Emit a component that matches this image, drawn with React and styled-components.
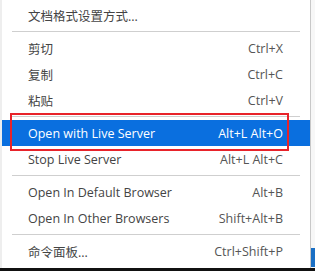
import React from 'react';
import styled, { createGlobalStyle } from 'styled-components';

const GlobalStyle = createGlobalStyle`
  html, body {
    margin: 0;
    padding: 0;
    background: #f3f3f3;
  }
  body {
    width: 315px;
    height: 271px;
    overflow: hidden;
    font-family: "Open Sans", "Noto Sans CJK SC", sans-serif;
  }
`;

const Screen = styled.div`
  width: 315px;
  height: 271px;
  display: flex;
  flex-direction: column;
`;

const Desk = styled.div`
  flex: 1;
  display: flex;
  min-height: 0;
`;

const EdgeStrip = styled.div`
  width: 2px;
  background: #eeeeee;
`;

const SideStrip = styled.div`
  flex: 1;
  display: flex;
  flex-direction: column;
  justify-content: flex-end;
  background: #f7f7f7;
  border-left: 1px solid #c8c8c8;
  padding-bottom: 1px;
`;

const SideBlock = styled.div`
  height: 19px;
  background: #1a6fc4;
`;

const Taskbar = styled.div`
  height: 3px;
  background: #111;
`;

const Menu = styled.div`
  position: relative;
  width: 308px;
  background: #fff;
  padding-top: 2px;
  display: flex;
  flex-direction: column;
`;

const Item = styled.div`
  height: 26px;
  display: flex;
  align-items: center;
  justify-content: space-between;
  padding: 0 27px 0 26px;
  font-size: 12.5px;
  color: ${({ active }) => (active ? '#fff' : '#444')};
  background: ${({ active }) => (active ? '#0a6fdf' : 'transparent')};
`;

const Label = styled.span`
  white-space: nowrap;
`;

const Keys = styled.span`
  white-space: nowrap;
  color: ${({ active }) => (active ? '#fff' : '#555')};
`;

const Separator = styled.div`
  height: 7px;
  display: flex;
  align-items: center;
  padding: 0 10px;

  &::after {
    content: '';
    flex: 1;
    height: 1px;
    background: #cfcfcf;
  }
`;

const Highlight = styled.div`
  position: absolute;
  left: 8px;
  top: 113px;
  width: 275px;
  height: 34px;
  border: 2px solid #e8232a;
  pointer-events: none;
`;

const groups = [
  [{ label: '文档格式设置方式...' }],
  [
    { label: '剪切', keys: 'Ctrl+X' },
    { label: '复制', keys: 'Ctrl+C' },
    { label: '粘贴', keys: 'Ctrl+V' },
  ],
  [
    { label: 'Open with Live Server', keys: 'Alt+L Alt+O', active: true },
    { label: 'Stop Live Server', keys: 'Alt+L Alt+C' },
  ],
  [
    { label: 'Open In Default Browser', keys: 'Alt+B' },
    { label: 'Open In Other Browsers', keys: 'Shift+Alt+B' },
  ],
  [{ label: '命令面板...', keys: 'Ctrl+Shift+P' }],
];

const App = () => (
  <Screen>
    <GlobalStyle />
    <Desk>
      <EdgeStrip />
      <Menu>
        {groups.map((group, i) => (
          <React.Fragment key={i}>
            {i > 0 && <Separator />}
            {group.map((item) => (
              <Item key={item.label} active={item.active}>
                <Label>{item.label}</Label>
                {item.keys && <Keys active={item.active}>{item.keys}</Keys>}
              </Item>
            ))}
          </React.Fragment>
        ))}
        <Highlight />
      </Menu>
      <SideStrip>
        <SideBlock />
      </SideStrip>
    </Desk>
    <Taskbar />
  </Screen>
);

export default App;
